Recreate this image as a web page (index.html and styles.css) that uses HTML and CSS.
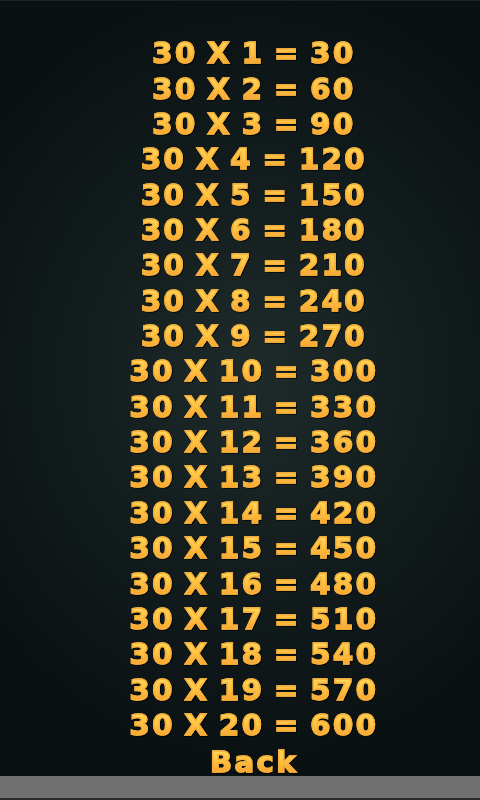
FILE: index.html
```html
<!DOCTYPE html>
<html>
<head>
<meta charset="utf-8">
<link rel="stylesheet" href="styles.css">
</head>
<body>
<div class="screen">
  <main class="table">
    <div class="row"><span class="txt">30 X 1 = 30</span></div>
    <div class="row"><span class="txt">30 X 2 = 60</span></div>
    <div class="row"><span class="txt">30 X 3 = 90</span></div>
    <div class="row"><span class="txt">30 X 4 = 120</span></div>
    <div class="row"><span class="txt">30 X 5 = 150</span></div>
    <div class="row"><span class="txt">30 X 6 = 180</span></div>
    <div class="row"><span class="txt">30 X 7 = 210</span></div>
    <div class="row"><span class="txt">30 X 8 = 240</span></div>
    <div class="row"><span class="txt">30 X 9 = 270</span></div>
    <div class="row"><span class="txt">30 X 10 = 300</span></div>
    <div class="row"><span class="txt">30 X 11 = 330</span></div>
    <div class="row"><span class="txt">30 X 12 = 360</span></div>
    <div class="row"><span class="txt">30 X 13 = 390</span></div>
    <div class="row"><span class="txt">30 X 14 = 420</span></div>
    <div class="row"><span class="txt">30 X 15 = 450</span></div>
    <div class="row"><span class="txt">30 X 16 = 480</span></div>
    <div class="row"><span class="txt">30 X 17 = 510</span></div>
    <div class="row"><span class="txt">30 X 18 = 540</span></div>
    <div class="row"><span class="txt">30 X 19 = 570</span></div>
    <div class="row"><span class="txt">30 X 20 = 600</span></div>
    <div class="row back"><span class="txt">Back</span></div>
  </main>
  <div class="bar"></div>
</div>
</body>
</html>
```
FILE: styles.css
```css
html, body {
  margin: 0;
  padding: 0;
  width: 480px;
  height: 800px;
  overflow: hidden;
  background: #0a1012;
}
.screen {
  width: 480px;
  height: 800px;
  display: flex;
  flex-direction: column;
}
.table {
  flex: 0 0 776px;
  min-height: 0;
  box-sizing: border-box;
  padding-top: 35px;
  padding-left: 28px;
  border-top: 1px solid #1a2224;
  background: radial-gradient(ellipse 70% 50% at 53% 48%, #1f2b2b 0%, #141e1f 45%, #0a1113 100%);
  display: flex;
  flex-direction: column;
  align-items: center;
}
.row {
  flex: 0 0 35.37px;
  display: flex;
  align-items: center;
  justify-content: center;
}
.row.back {
  flex: 0 0 28px;
  margin-top: 4.5px;
}
.txt {
  font-family: "DejaVu Sans", sans-serif;
  font-weight: bold;
  font-size: 29px;
  letter-spacing: 2.5px;
  word-spacing: -3px;
  line-height: 1;
  white-space: pre;
  background: linear-gradient(to bottom, #ffdc60 0%, #ffc444 45%, #f29a2c 100%);
  -webkit-background-clip: text;
  background-clip: text;
  -webkit-text-fill-color: transparent;
  color: transparent;
  -webkit-text-stroke: 1.4px #f8b03a;
  filter: drop-shadow(1px 1px 0 rgba(0,0,0,0.6));
}
.back .txt {
  line-height: 28px;
}
.bar {
  flex: 0 0 22px;
  background: #707070;
  border-bottom: 2px solid #2a2a2a;
}
```
